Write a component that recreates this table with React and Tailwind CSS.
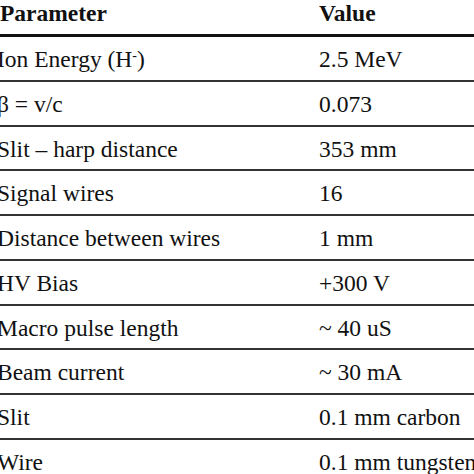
const rows = [
  ["Ion Energy (H", "2.5 MeV", true],
  ["β  = v/c", "0.073"],
  ["Slit – harp distance", "353 mm"],
  ["Signal wires", "16"],
  ["Distance between wires", "1 mm"],
  ["HV Bias", "+300 V"],
  ["Macro pulse length", "~ 40 uS"],
  ["Beam current", "~ 30 mA"],
  ["Slit", "0.1 mm carbon"],
  ["Wire", "0.1 mm tungsten"],
];

export default function App() {
  return (
    <div
      className="w-[474px] h-[474px] overflow-hidden bg-white text-[#111] text-[23.5px]"
      style={{ fontFamily: '"Liberation Serif", "Times New Roman", serif' }}
    >
      {/* header */}
      <div className="flex h-[37px] pb-2 border-b-[3px] border-[#111] font-bold leading-[26px]">
        <div className="w-[319px] shrink-0 whitespace-nowrap">Parameter</div>
        <div className="whitespace-nowrap">Value</div>
      </div>

      {rows.map(([name, value, sup], i) => (
        <div
          key={i}
          className="flex h-[44.75px] pt-[1px] border-b-2 border-[#333] leading-[42.75px]"
        >
          <div className="w-[322px] shrink-0 whitespace-nowrap -ml-[3px]">
            {name}
            {sup && (
              <>
                <sup className="text-[14px] leading-none">-</sup>)
              </>
            )}
          </div>
          <div className="whitespace-nowrap">{value}</div>
        </div>
      ))}
    </div>
  );
}
